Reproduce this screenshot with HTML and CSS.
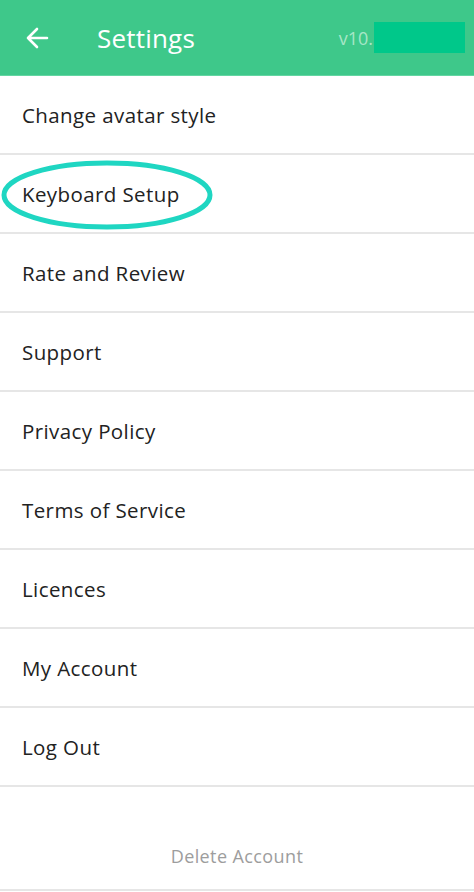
FILE: index.html
```html
<!DOCTYPE html>
<html lang="en">
<head>
    <meta charset="UTF-8">
    <meta name="viewport" content="width=device-width, initial-scale=1.0">
    <title>Settings</title>
    <link rel="stylesheet" href="styles.css">
</head>
<body>
    <div class="header">
        <div class="back">
            <svg width="24" height="22" viewBox="0 0 24 22">
                <path d="M22 11H3M12 2L3 11l9 9" fill="none" stroke="#fff" stroke-width="2.6" stroke-linecap="round" stroke-linejoin="round"/>
            </svg>
        </div>
        <h1>Settings</h1>
        <div class="version">v10.<span class="redacted"></span></div>
    </div>

    <ul class="menu">
        <li>Change avatar style</li>
        <li class="highlight">
            Keyboard Setup
            <svg class="circle" width="216" height="74" viewBox="0 0 216 74">
                <ellipse cx="107" cy="37" rx="103" ry="32" fill="none" stroke="#1fd6c2" stroke-width="5"/>
            </svg>
        </li>
        <li>Rate and Review</li>
        <li>Support</li>
        <li>Privacy Policy</li>
        <li>Terms of Service</li>
        <li>Licences</li>
        <li>My Account</li>
        <li>Log Out</li>
    </ul>

    <div class="footer">
        <span>Delete Account</span>
    </div>
</body>
</html>
```

FILE: styles.css
```css
* {
    box-sizing: border-box;
    margin: 0;
    padding: 0;
}

body {
    font-family: "Open Sans", "Noto Sans", sans-serif;
    background: white;
    color: #222;
    width: 474px;
}

.header {
    background: #3ec88a;
    height: 76px;
    border-bottom: 1px solid #63d6a2;
    display: flex;
    align-items: center;
    padding: 0 0 0 25px;
}

.back {
    display: flex;
    width: 72px;
}

.header h1 {
    color: white;
    font-size: 26px;
    font-weight: 400;
    letter-spacing: 0.2px;
}

.version {
    margin-left: auto;
    margin-right: 9px;
    display: flex;
    align-items: center;
    color: #a7e6c7;
    font-size: 18px;
}

.redacted {
    display: inline-block;
    width: 91px;
    height: 31px;
    background: #00c88a;
    margin-left: 1px;
}

.menu {
    list-style: none;
}

.menu li {
    height: 79px;
    border-bottom: 2px solid #e6e6e6;
    display: flex;
    align-items: center;
    padding-left: 22px;
    font-size: 20.5px;
    letter-spacing: 0.4px;
    position: relative;
}

.circle {
    position: absolute;
    left: 0;
    top: 3px;
}

.footer {
    height: 104px;
    border-bottom: 2px solid #e6e6e6;
    display: flex;
    align-items: flex-end;
    justify-content: center;
    padding-bottom: 21px;
    color: #9d9d9d;
    font-size: 18px;
    letter-spacing: 0.4px;
}
```
